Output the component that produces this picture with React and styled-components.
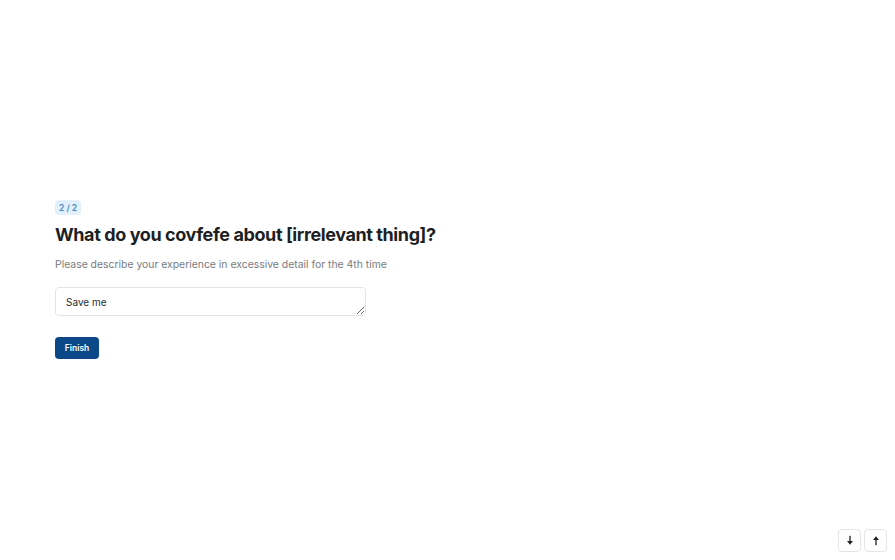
import React from 'react';
import styled, { createGlobalStyle } from 'styled-components';

const GlobalStyle = createGlobalStyle`
  html, body {
    margin: 0;
    padding: 0;
    background: #fff;
    font-family: Inter, "Noto Sans", sans-serif;
  }
`;

// small arrow with a solid head, like the one in the corner nav
function Arrow({ up }) {
  return (
    <svg width="10" height="11" viewBox="0 0 10 11" style={{ transform: up ? 'rotate(180deg)' : 'none' }}>
      <rect x="4.35" y="0.8" width="1.3" height="6" fill="currentColor" />
      <path d="M2 6 L8 6 L5 9.8 Z" fill="currentColor" />
    </svg>
  );
}

export default function App() {
  return (
    <Page>
      <GlobalStyle />
      <Form>
        <Badge>2 / 2</Badge>
        <Title>What do you covfefe about [irrelevant thing]?</Title>
        <Desc>Please describe your experience in excessive detail for the 4th time</Desc>
        <Answer defaultValue="Save me" />
        <Finish>Finish</Finish>
      </Form>
      <Nav>
        <NavButton aria-label="next"><Arrow /></NavButton>
        <NavButton aria-label="previous"><Arrow up /></NavButton>
      </Nav>
    </Page>
  );
}

const Page = styled.div`
  position: relative;
  width: 895px;
  height: 560px;
  overflow: hidden;
`;

const Form = styled.div`
  display: flex;
  flex-direction: column;
  align-items: flex-start;
  padding: 200px 0 0 55px;
`;

const Badge = styled.span`
  display: inline-flex;
  align-items: center;
  height: 15px;
  padding: 0 4px;
  border-radius: 4px;
  background: #e1f0fb;
  color: #4a8cc4;
  font-size: 8.5px;
  font-weight: 600;
`;

const Title = styled.h1`
  margin: 8px 0 0;
  font-size: 18px;
  line-height: 24px;
  font-weight: 700;
  color: #1d1f22;
  letter-spacing: -0.4px;
`;

const Desc = styled.p`
  margin: 10px 0 0;
  font-size: 10.4px;
  line-height: 16px;
  color: #777b82;
`;

const Answer = styled.textarea`
  box-sizing: border-box;
  width: 311px;
  height: 29px;
  margin-top: 14px;
  padding: 7px 10px;
  border: 1px solid #e2e3e5;
  border-radius: 4px;
  font-family: Inter, "Noto Sans", sans-serif;
  font-size: 10px;
  line-height: 14px;
  color: #2a2c30;
  resize: vertical;
  outline: none;
`;

const Finish = styled.button`
  margin-top: 21px;
  width: 44px;
  height: 22px;
  border: none;
  border-radius: 4px;
  background: #0b4888;
  color: #fff;
  font-family: Inter, "Noto Sans", sans-serif;
  font-size: 8.5px;
  font-weight: 600;
  cursor: pointer;
`;

const Nav = styled.div`
  position: absolute;
  right: 8px;
  bottom: 8px;
  display: flex;
  gap: 3px;
`;

const NavButton = styled.button`
  display: flex;
  align-items: center;
  justify-content: center;
  width: 23px;
  height: 23px;
  padding: 0;
  border: 1px solid #e4e5e7;
  border-radius: 4px;
  background: #fff;
  color: #222;
`;
